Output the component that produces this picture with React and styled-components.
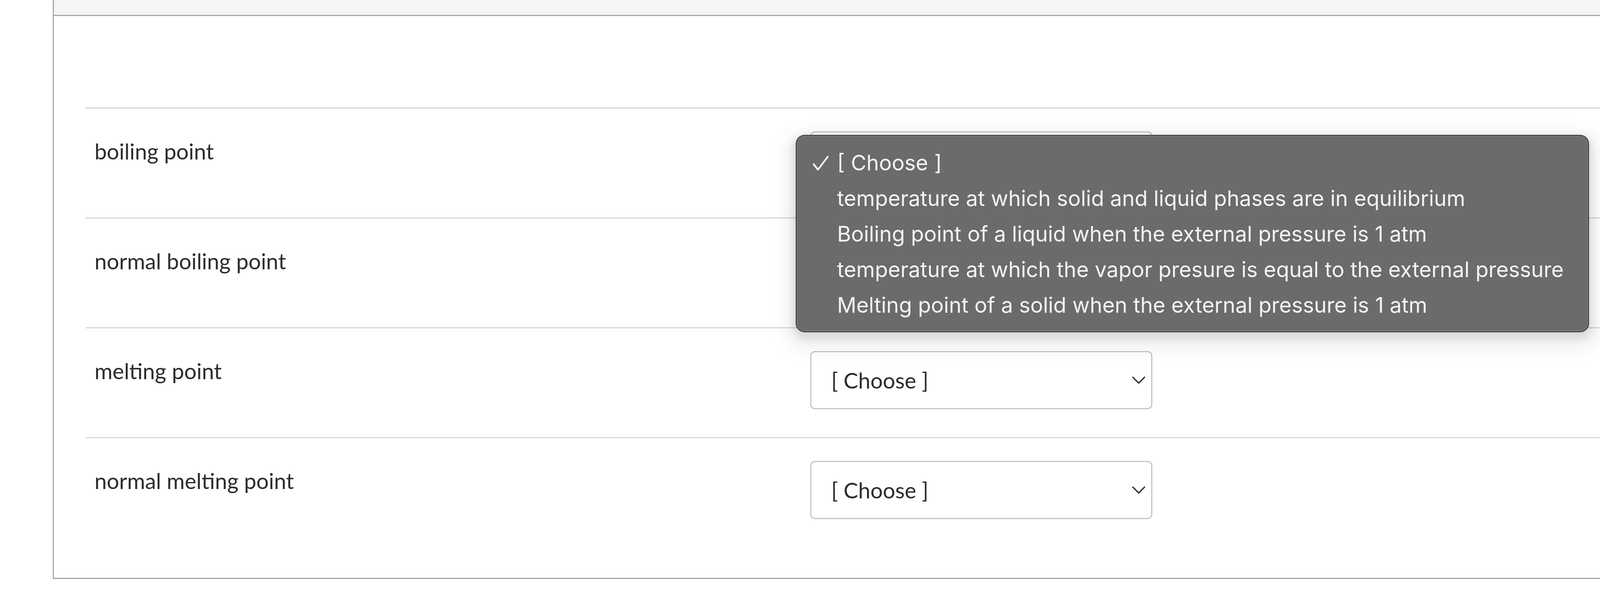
import React from 'react'
import styled, { createGlobalStyle } from 'styled-components'

const GlobalStyle = createGlobalStyle`
  html, body {
    margin: 0;
    padding: 0;
    background: #fff;
    overflow: hidden;
  }
  body {
    font-family: 'Lato', 'Noto Sans', sans-serif;
  }
`

const Page = styled.div`
  width: 100%;
  height: 1563px;
  overflow: hidden;
  background: #fff;
`

const Panel = styled.div`
  margin-left: 135px;
  width: 4789px;
  box-sizing: border-box;
  border: 3px solid #a8a8a8;
  border-top: none;
  background: #fff;
`

const Header = styled.div`
  height: 38px;
  background: #f5f5f5;
  border-bottom: 3px solid #a8a8a8;
`

const Body = styled.div`
  padding: 234px 78px 79px 81px;
`

const Row = styled.div`
  display: grid;
  grid-template-columns: 1855px 1fr;
  height: 278px;
  border-top: 3px solid #d8d8d8;
`

const Label = styled.div`
  padding: 67px 0 0 23px;
  font-family: 'Lato', sans-serif;
  font-size: 56px;
  line-height: 84px;
  color: #2d2d2d;
`

const SelectWrap = styled.div`
  position: relative;
  padding-top: 58px;
`

const SelectBox = styled.div`
  box-sizing: border-box;
  width: 876px;
  height: 149px;
  display: flex;
  align-items: center;
  justify-content: space-between;
  padding: 0 15px 0 51px;
  border: 3px solid #c6c6c6;
  border-radius: 12px;
  background: #fff;
  font-family: 'Lato', sans-serif;
  font-size: 56px;
  line-height: 67px;
  color: #2d2d2d;
`

const Chevron = () => (
  <svg width="34" height="22" viewBox="0 0 34 22" fill="none">
    <path d="M2 3 L17 18 L32 3" stroke="#333" strokeWidth="3.4" strokeLinecap="round" strokeLinejoin="round" />
  </svg>
)

// native select popup, laid over the first select
const Menu = styled.div`
  position: absolute;
  left: -37px;
  top: 67px;
  width: 2031px;
  box-sizing: border-box;
  padding: 23px 0;
  background: #6b6b6b;
  border: 2px solid #363636;
  border-radius: 23px;
  box-shadow:
    inset 0 0 0 3px #747474,
    0 10px 22px 8px rgba(0, 0, 0, 0.1),
    0 20px 50px 24px rgba(0, 0, 0, 0.06);
  z-index: 10;
`

const MenuItem = styled.div`
  display: flex;
  align-items: center;
  height: 91px;
  padding-left: 41px;
  font-family: 'Inter', 'Noto Sans', sans-serif;
  font-size: 54.5px;
  color: #f3f3f3;
  white-space: nowrap;
`

const CheckSlot = styled.span`
  display: inline-flex;
  width: 63px;
  flex: none;
  padding-top: 4px;
`

const Check = () => (
  <svg width="42" height="40" viewBox="0 0 42 40" fill="none">
    <path d="M3 22 L14 36 L39 3" stroke="#f3f3f3" strokeWidth="4.5" strokeLinecap="round" strokeLinejoin="round" />
  </svg>
)

const options = [
  '[ Choose ]',
  'temperature at which solid and liquid phases are in equilibrium',
  'Boiling point of a liquid when the external pressure is 1 atm',
  'temperature at which the vapor presure is equal to the external pressure',
  'Melting point of a solid when the external pressure is 1 atm',
]

const rows = ['boiling point', 'normal boiling point', 'melting point', 'normal melting point']

export default function App() {
  return (
    <Page>
      <GlobalStyle />
      <Panel>
        <Header />
        <Body>
          {rows.map((label, i) => (
            <Row key={label}>
              <Label>{label}</Label>
              <SelectWrap>
                <SelectBox>
                  <span>[ Choose ]</span>
                  <Chevron />
                </SelectBox>
                {i === 0 && (
                  <Menu>
                    {options.map((opt, j) => (
                      <MenuItem key={opt}>
                        <CheckSlot>{j === 0 && <Check />}</CheckSlot>
                        {opt}
                      </MenuItem>
                    ))}
                  </Menu>
                )}
              </SelectWrap>
            </Row>
          ))}
        </Body>
      </Panel>
    </Page>
  )
}
